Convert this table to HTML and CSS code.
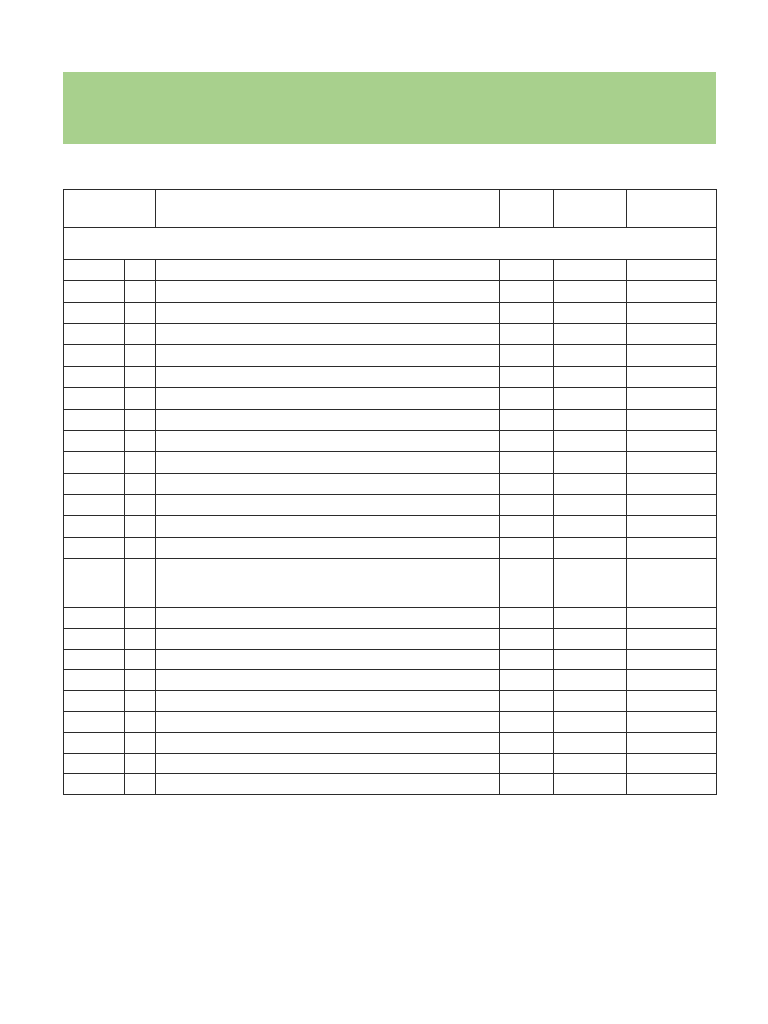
FILE: index.html
```html
<!DOCTYPE html>
<html lang="en">
<head>
<meta charset="utf-8">
<title>Form</title>
<link rel="stylesheet" href="styles.css">
</head>
<body>
<div class="page">
  <div class="banner"></div>
  <table class="grid">
    <colgroup>
      <col class="c1"><col class="c2"><col class="c3"><col class="c4"><col class="c5"><col class="c6">
    </colgroup>
    <tbody>
      <tr class="r-head"><td colspan="2"></td><td></td><td></td><td></td><td></td></tr>
      <tr class="r-sect"><td colspan="6"></td></tr>
      <tr class="r-a"><td></td><td></td><td></td><td></td><td></td><td></td></tr>
      <tr class="r-a"><td></td><td></td><td></td><td></td><td></td><td></td></tr>
      <tr class="r-a"><td></td><td></td><td></td><td></td><td></td><td></td></tr>
      <tr class="r-a"><td></td><td></td><td></td><td></td><td></td><td></td></tr>
      <tr class="r-a"><td></td><td></td><td></td><td></td><td></td><td></td></tr>
      <tr class="r-a"><td></td><td></td><td></td><td></td><td></td><td></td></tr>
      <tr class="r-a"><td></td><td></td><td></td><td></td><td></td><td></td></tr>
      <tr class="r-a"><td></td><td></td><td></td><td></td><td></td><td></td></tr>
      <tr class="r-a"><td></td><td></td><td></td><td></td><td></td><td></td></tr>
      <tr class="r-a"><td></td><td></td><td></td><td></td><td></td><td></td></tr>
      <tr class="r-a"><td></td><td></td><td></td><td></td><td></td><td></td></tr>
      <tr class="r-a"><td></td><td></td><td></td><td></td><td></td><td></td></tr>
      <tr class="r-a"><td></td><td></td><td></td><td></td><td></td><td></td></tr>
      <tr class="r-a"><td></td><td></td><td></td><td></td><td></td><td></td></tr>
      <tr class="r-tall"><td></td><td></td><td></td><td></td><td></td><td></td></tr>
      <tr class="r-b"><td></td><td></td><td></td><td></td><td></td><td></td></tr>
      <tr class="r-b"><td></td><td></td><td></td><td></td><td></td><td></td></tr>
      <tr class="r-b"><td></td><td></td><td></td><td></td><td></td><td></td></tr>
      <tr class="r-b"><td></td><td></td><td></td><td></td><td></td><td></td></tr>
      <tr class="r-b"><td></td><td></td><td></td><td></td><td></td><td></td></tr>
      <tr class="r-b"><td></td><td></td><td></td><td></td><td></td><td></td></tr>
      <tr class="r-b"><td></td><td></td><td></td><td></td><td></td><td></td></tr>
      <tr class="r-b"><td></td><td></td><td></td><td></td><td></td><td></td></tr>
      <tr class="r-b"><td></td><td></td><td></td><td></td><td></td><td></td></tr>
    </tbody>
  </table>
</div>
</body>
</html>
```
FILE: styles.css
```css
html, body {
  margin: 0;
  padding: 0;
  background: #ffffff;
  font-family: "Liberation Sans", Arial, sans-serif;
}
.page {
  padding: 72px 0 0 63px;
}
.banner {
  width: 653px;
  height: 72px;
  background: #a8d08d;
}
.grid {
  margin-top: 45px;
  border-collapse: collapse;
  table-layout: fixed;
  width: 654px;
}
.grid td {
  border: 1px solid #2b2b2b;
  padding: 0;
}
.c1 { width: 61px; }
.c2 { width: 31px; }
.c3 { width: 344px; }
.c4 { width: 54px; }
.c5 { width: 73px; }
.c6 { width: 90px; }
.r-head td { height: 37px; }
.r-sect td { height: 31px; }
.r-a td { height: 20.36px; }
.r-tall td { height: 48px; }
.r-b td { height: 19.8px; }
```
